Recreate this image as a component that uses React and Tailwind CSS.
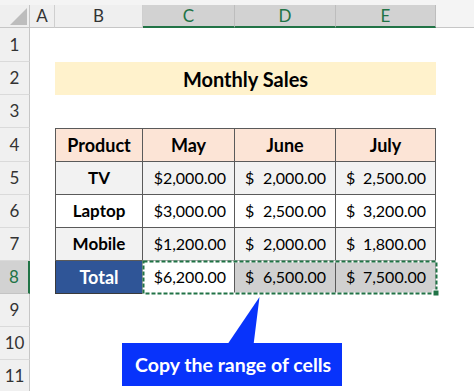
import React from "react";

function RowHead({ n, sel }) {
  return (
    <div
      className={
        sel
          ? "w-[30px] shrink-0 flex items-center justify-center text-[17px] bg-[#d2d2d2] text-[#217346] border-r-2 border-r-[#217346] border-b border-b-[#c4c4c4]"
          : "w-[30px] shrink-0 flex items-center justify-center text-[17px] bg-[#f0f0f0] text-[#333] border-r border-r-[#c6c6c6] border-b border-b-[#dadada]"
      }
    >
      {n}
    </div>
  );
}

function ColHead({ w, label, sel }) {
  return (
    <div
      className={
        sel
          ? `${w} shrink-0 flex items-center justify-center text-[17px] bg-[#d2d2d2] text-[#217346] border-r border-r-[#bdbdbd] border-b-2 border-b-[#217346]`
          : `${w} shrink-0 flex items-center justify-center text-[17px] bg-[#efefef] text-[#333] border-r border-r-[#cfcfcf] border-b border-b-[#c6c6c6]`
      }
    >
      {label}
    </div>
  );
}

function Acct({ v, w, bg }) {
  return (
    <div className={`${w} shrink-0 flex items-center justify-between pl-[10px] pr-[9px] text-[16px] border-r border-b border-[#5a5a5a] ${bg}`}>
      <span>$</span>
      <span>{v}</span>
    </div>
  );
}

const data = [
  { n: 5, label: "TV", c: "$2,000.00", d: "2,000.00", e: "2,500.00", bg: "bg-[#f2f2f2]" },
  { n: 6, label: "Laptop", c: "$3,000.00", d: "2,500.00", e: "3,200.00", bg: "bg-white" },
  { n: 7, label: "Mobile", c: "$1,200.00", d: "2,000.00", e: "1,800.00", bg: "bg-[#f2f2f2]" },
];

export default function App() {
  return (
    <div className="relative w-[474px] h-[391px] overflow-hidden bg-white text-black font-['Lato',sans-serif]">
      <div className="h-[5px] bg-[#f4f4f4]" />
      {/* column headers */}
      <div className="flex h-[23px]">
        <div className="relative w-[30px] shrink-0 bg-[#efefef] border-r border-r-[#c6c6c6] border-b border-b-[#c6c6c6]">
          <svg className="absolute left-0 top-0" width="30" height="23" viewBox="0 0 30 23">
            <polygon points="27,3 27,20 10,20" fill="#bdbdbd" />
          </svg>
        </div>
        <ColHead w="w-[25px]" label="A" />
        <ColHead w="w-[88px]" label="B" />
        <ColHead w="w-[92px]" label="C" sel />
        <ColHead w="w-[101px]" label="D" sel />
        <ColHead w="w-[100px]" label="E" sel />
        <div className="flex-1 bg-[#f4f4f4] border-b border-b-[#c6c6c6]" />
      </div>

      {/* row 1 */}
      <div className="flex h-[34px]">
        <RowHead n={1} />
      </div>
      {/* row 2 */}
      <div className="flex h-[33px]">
        <RowHead n={2} />
        <div className="w-[25px] shrink-0" />
        <div className="w-[381px] shrink-0 bg-[#fff2cc] flex items-center justify-center text-[20px] font-bold">
          Monthly Sales
        </div>
      </div>
      {/* row 3 */}
      <div className="flex h-[33px]">
        <RowHead n={3} />
      </div>
      {/* row 4 header */}
      <div className="flex h-[34px]">
        <RowHead n={4} />
        <div className="w-[25px] shrink-0" />
        <div className="w-[88px] shrink-0 flex items-center justify-center text-[18px] font-bold bg-[#fce4d6] border border-[#5a5a5a]">Product</div>
        <div className="w-[92px] shrink-0 flex items-center justify-center text-[18px] font-bold bg-[#fce4d6] border-t border-r border-b border-[#5a5a5a]">May</div>
        <div className="w-[101px] shrink-0 flex items-center justify-center text-[18px] font-bold bg-[#fce4d6] border-t border-r border-b border-[#5a5a5a]">June</div>
        <div className="w-[100px] shrink-0 flex items-center justify-center text-[18px] font-bold bg-[#fce4d6] border-t border-r border-b border-[#5a5a5a]">July</div>
      </div>
      {data.map((r) => (
        <div key={r.n} className="flex h-[33px]">
          <RowHead n={r.n} />
          <div className="w-[25px] shrink-0" />
          <div className={`w-[88px] shrink-0 flex items-center justify-center text-[17px] font-bold border-l border-r border-b border-[#5a5a5a] ${r.bg}`}>{r.label}</div>
          <div className={`w-[92px] shrink-0 flex items-center justify-end pr-[8px] text-[16px] border-r border-b border-[#5a5a5a] ${r.bg}`}>{r.c}</div>
          <Acct v={r.d} w="w-[101px]" bg={r.bg} />
          <Acct v={r.e} w="w-[100px]" bg={r.bg} />
        </div>
      ))}
      {/* row 8 total */}
      <div className="flex h-[33px]">
        <RowHead n={8} sel />
        <div className="w-[25px] shrink-0" />
        <div className="w-[88px] shrink-0 flex items-center justify-center text-[18px] font-bold text-white bg-[#2f5597] border-l border-r border-b border-[#3a3a3a]">Total</div>
        <div className="w-[92px] shrink-0 flex items-center justify-end pr-[8px] text-[16px] bg-white border-r border-b border-[#5a5a5a]">$6,200.00</div>
        <Acct v="6,500.00" w="w-[101px]" bg="bg-[#d0d0d0]" />
        <Acct v="7,500.00" w="w-[100px]" bg="bg-[#d0d0d0]" />
      </div>
      {/* rows 9-11 */}
      <div className="flex h-[33px]">
        <RowHead n={9} />
      </div>
      <div className="flex h-[33px]">
        <RowHead n={10} />
      </div>
      <div className="flex h-[33px]">
        <RowHead n={11} />
      </div>

      {/* marching ants copy border */}
      <svg className="absolute left-[142px] top-[260px]" width="298" height="38" viewBox="0 0 298 38">
        <rect x="1.5" y="1.5" width="293" height="32" fill="none" stroke="#ffffff" strokeWidth="2" />
        <rect x="1.5" y="1.5" width="293" height="32" fill="none" stroke="#217346" strokeWidth="2" strokeDasharray="4 2" />
        <rect x="291" y="30" width="6" height="6" fill="#217346" stroke="#ffffff" strokeWidth="1" />
      </svg>

      {/* callout */}
      <svg className="absolute left-[225px] top-[295px]" width="40" height="52" viewBox="0 0 40 52">
        <polygon points="34.5,2 28.5,50 2,50" fill="#0833fb" />
      </svg>
      <div className="absolute left-[122px] top-[343px] w-[220px] h-[43px] bg-[#0833fb] flex items-center pl-[13px] text-white text-[19.5px] font-bold">
        Copy the range of cells
      </div>
    </div>
  );
}
